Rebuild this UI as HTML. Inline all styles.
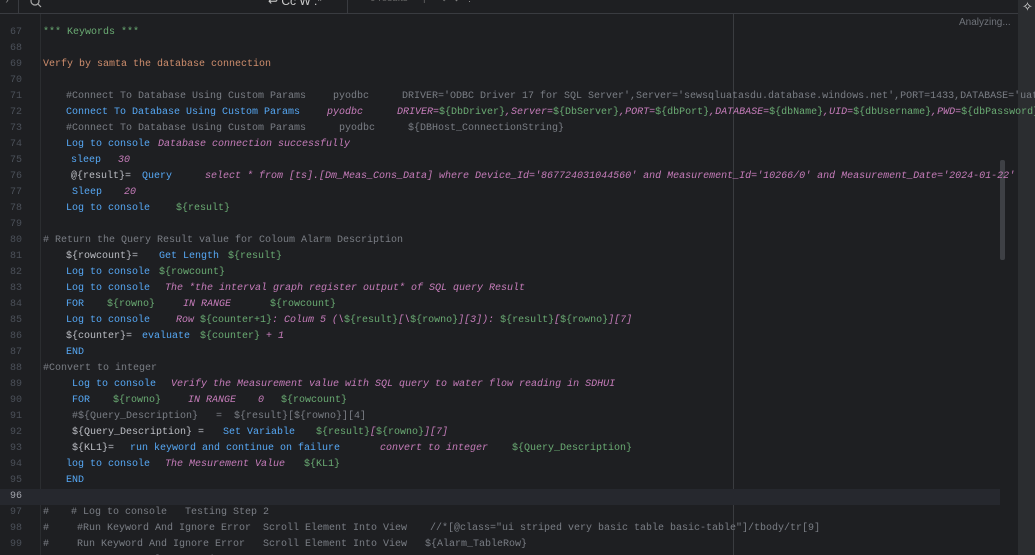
<!DOCTYPE html>
<html style="width:1035px;height:555px;overflow:hidden"><head><meta charset="utf-8"><style>
body{margin:0;width:1035px;height:555px;overflow:hidden;background:#1e1f22;font-family:"Liberation Mono",monospace;font-size:10px;position:relative}
.top{position:absolute;left:0;top:0;width:1018px;height:13px;background:#1e1f22;border-bottom:1px solid #393b40;overflow:hidden}
.rs{position:absolute;left:1018px;top:0;width:17px;height:555px;background:#2b2d30}
.l{position:absolute;left:0;width:1000px;height:16px;line-height:16px;margin-top:2px}
.l span{position:absolute;white-space:pre;top:0}
.n{left:0;width:22px;text-align:right;color:#4b5059}
.c{color:#7a7e85}.b{color:#56a8f5}.g{color:#6aab73}.o{color:#cf8e6d}.p{color:#c77dbb;font-style:italic}.d{color:#bcbec4}
.gut{position:absolute;left:40px;top:14px;width:1px;height:541px;background:#2b2d30}
.guide{position:absolute;left:733px;top:14px;width:1px;height:541px;background:#3a3c40}
</style></head><body>
<div class="top">
<span style="position:absolute;left:4px;top:-4px;color:#888;font-size:10px">›</span>
<div style="position:absolute;left:18px;top:0;width:1px;height:13px;background:#393b40"></div>
<svg style="position:absolute;left:29px;top:0" width="14" height="8"><circle cx="6" cy="1" r="4" fill="none" stroke="#aaa" stroke-width="1.2"/><path d="M9 4l3 3" stroke="#aaa" stroke-width="1.2"/></svg>
<span style="position:absolute;left:268px;top:-6px;color:#ccc;font-family:'Liberation Sans';font-size:12px">↩ Cc W .*</span>
<div style="position:absolute;left:347px;top:0;width:1px;height:13px;background:#393b40"></div>
<span style="position:absolute;left:370px;top:-7px;color:#666;font-family:'Liberation Sans';font-size:10px">0 results</span>
<span style="position:absolute;left:423px;top:-7px;color:#666;font-family:'Liberation Sans';font-size:10px">|</span>
<span style="position:absolute;left:440px;top:-7px;color:#888;font-family:'Liberation Sans';font-size:10px">⇩ &nbsp;↕ &nbsp;⋮</span>
<span style="position:absolute;left:1000px;top:-6px;color:#ccc;font-size:10px">^</span>
</div>
<div class="rs"><span style="position:absolute;left:4px;top:0px;color:#ddd;font-size:13px;font-family:'DejaVu Sans'">✧</span></div>
<div class="gut"></div><div class="guide"></div>
<div style="position:absolute;left:1000px;top:160px;width:5px;height:100px;background:#3e4045;border-radius:2px"></div>
<span style="position:absolute;left:959px;top:17px;color:#6f737a;font-family:'Liberation Sans';font-size:10px">Analyzing...</span>
<div class="l" style="top:487px;background:#26282e;width:1000px"></div>

<div class="l" style="top:23px"><span class="n">67</span><span class="g" style="left:43px">*** Keywords ***</span></div>
<div class="l" style="top:39px"><span class="n">68</span></div>
<div class="l" style="top:55px"><span class="n">69</span><span class="o" style="left:43px">Verfy by samta the database connection</span></div>
<div class="l" style="top:71px"><span class="n">70</span></div>
<div class="l" style="top:87px"><span class="n">71</span><span class="c" style="left:66px">#Connect To Database Using Custom Params</span><span class="c" style="left:333px">pyodbc</span><span class="c" style="left:402px">DRIVER='ODBC Driver 17 for SQL Server',Server='sewsqluatasdu.database.windows.net',PORT=1433,DATABASE='uat</span></div>
<div class="l" style="top:103px"><span class="n">72</span><span class="b" style="left:66px">Connect To Database Using Custom Params</span><span class="p" style="left:327px">pyodbc</span><span style="left:397px"><i class="p" style="position:static">DRIVER=</i><b class="g" style="font-weight:normal">${DbDriver}</b><i class="p">,Server=</i><b class="g" style="font-weight:normal">${DbServer}</b><i class="p">,PORT=</i><b class="g" style="font-weight:normal">${dbPort}</b><i class="p">,DATABASE=</i><b class="g" style="font-weight:normal">${dbName}</b><i class="p">,UID=</i><b class="g" style="font-weight:normal">${dbUsername}</b><i class="p">,PWD=</i><b class="g" style="font-weight:normal">${dbPassword}</b></span></div>
<div class="l" style="top:119px"><span class="n">73</span><span class="c" style="left:66px">#Connect To Database Using Custom Params</span><span class="c" style="left:339px">pyodbc</span><span class="c" style="left:408px">${DBHost_ConnectionString}</span></div>
<div class="l" style="top:135px"><span class="n">74</span><span class="b" style="left:66px">Log to console</span><span class="p" style="left:158px">Database connection successfully</span></div>
<div class="l" style="top:151px"><span class="n">75</span><span class="b" style="left:71px">sleep</span><span class="p" style="left:118px">30</span></div>
<div class="l" style="top:167px"><span class="n">76</span><span class="d" style="left:71px">@{result}=</span><span class="b" style="left:142px">Query</span><span class="p" style="left:205px">select * from [ts].[Dm_Meas_Cons_Data] where Device_Id='867724031044560' and Measurement_Id='10266/0' and Measurement_Date='2024-01-22'</span></div>
<div class="l" style="top:183px"><span class="n">77</span><span class="b" style="left:72px">Sleep</span><span class="p" style="left:124px">20</span></div>
<div class="l" style="top:199px"><span class="n">78</span><span class="b" style="left:66px">Log to console</span><span class="g" style="left:176px">${result}</span></div>
<div class="l" style="top:215px"><span class="n">79</span></div>
<div class="l" style="top:231px"><span class="n">80</span><span class="c" style="left:43px"># Return the Query Result value for Coloum Alarm Description</span></div>
<div class="l" style="top:247px"><span class="n">81</span><span class="d" style="left:66px">${rowcount}=</span><span class="b" style="left:159px">Get Length</span><span class="g" style="left:228px">${result}</span></div>
<div class="l" style="top:263px"><span class="n">82</span><span class="b" style="left:66px">Log to console</span><span class="g" style="left:159px">${rowcount}</span></div>
<div class="l" style="top:279px"><span class="n">83</span><span class="b" style="left:66px">Log to console</span><span class="p" style="left:165px">The *the interval graph register output* of SQL query Result</span></div>
<div class="l" style="top:295px"><span class="n">84</span><span class="b" style="left:66px">FOR</span><span class="g" style="left:107px">${rowno}</span><span class="p" style="left:183px">IN RANGE</span><span class="g" style="left:270px">${rowcount}</span></div>
<div class="l" style="top:311px"><span class="n">85</span><span class="b" style="left:66px">Log to console</span><span style="left:176px"><i class="p">Row </i><b class="g" style="font-weight:normal">${counter+1}</b><i class="p">: Colum 5 (\</i><b class="g" style="font-weight:normal">${result}</b><i class="p">[\</i><b class="g" style="font-weight:normal">${rowno}</b><i class="p">][3]): </i><b class="g" style="font-weight:normal">${result}</b><i class="p">[</i><b class="g" style="font-weight:normal">${rowno}</b><i class="p">][7]</i></span></div>
<div class="l" style="top:327px"><span class="n">86</span><span class="d" style="left:66px">${counter}=</span><span class="b" style="left:142px">evaluate</span><span class="g" style="left:200px">${counter} <i class="p">+ 1</i></span></div>
<div class="l" style="top:343px"><span class="n">87</span><span class="b" style="left:66px">END</span></div>
<div class="l" style="top:359px"><span class="n">88</span><span class="c" style="left:43px">#Convert to integer</span></div>
<div class="l" style="top:375px"><span class="n">89</span><span class="b" style="left:72px">Log to console</span><span class="p" style="left:171px">Verify the Measurement value with SQL query to water flow reading in SDHUI</span></div>
<div class="l" style="top:391px"><span class="n">90</span><span class="b" style="left:72px">FOR</span><span class="g" style="left:113px">${rowno}</span><span class="p" style="left:188px">IN RANGE</span><span class="p" style="left:258px">0</span><span class="g" style="left:281px">${rowcount}</span></div>
<div class="l" style="top:407px"><span class="n">91</span><span class="c" style="left:72px">#${Query_Description}   =  ${result}[${rowno}][4]</span></div>
<div class="l" style="top:423px"><span class="n">92</span><span class="d" style="left:72px">${Query_Description} =</span><span class="b" style="left:223px">Set Variable</span><span style="left:316px"><b class="g" style="font-weight:normal">${result}</b><i class="p">[</i><b class="g" style="font-weight:normal">${rowno}</b><i class="p">][7]</i></span></div>
<div class="l" style="top:439px"><span class="n">93</span><span class="d" style="left:72px">${KL1}=</span><span class="b" style="left:130px">run keyword and continue on failure</span><span class="p" style="left:380px">convert to integer</span><span class="g" style="left:512px">${Query_Description}</span></div>
<div class="l" style="top:455px"><span class="n">94</span><span class="b" style="left:66px">log to console</span><span class="p" style="left:165px">The Mesurement Value</span><span class="g" style="left:304px">${KL1}</span></div>
<div class="l" style="top:471px"><span class="n">95</span><span class="b" style="left:66px">END</span></div>
<div class="l" style="top:487px"><span class="n" style="color:#a1a3ab">96</span></div>
<div class="l" style="top:503px"><span class="n">97</span><span class="c" style="left:43px">#</span><span class="c" style="left:71px"># Log to console   Testing Step 2</span></div>
<div class="l" style="top:519px"><span class="n">98</span><span class="c" style="left:43px">#</span><span class="c" style="left:77px">#Run Keyword And Ignore Error</span><span class="c" style="left:263px">Scroll Element Into View</span><span class="c" style="left:430px">//*[@class="ui striped very basic table basic-table"]/tbody/tr[9]</span></div>
<div class="l" style="top:535px"><span class="n">99</span><span class="c" style="left:43px">#</span><span class="c" style="left:77px">Run Keyword And Ignore Error</span><span class="c" style="left:263px">Scroll Element Into View</span><span class="c" style="left:425px">${Alarm_TableRow}</span></div>
<div class="l" style="top:549px;height:4px;overflow:hidden"><span class="n" style="top:2px">100</span><span class="c" style="left:43px;top:2px">#</span><span class="c" style="left:71px;top:2px"># Log to console   Testing Step 3</span></div>
</body></html>
